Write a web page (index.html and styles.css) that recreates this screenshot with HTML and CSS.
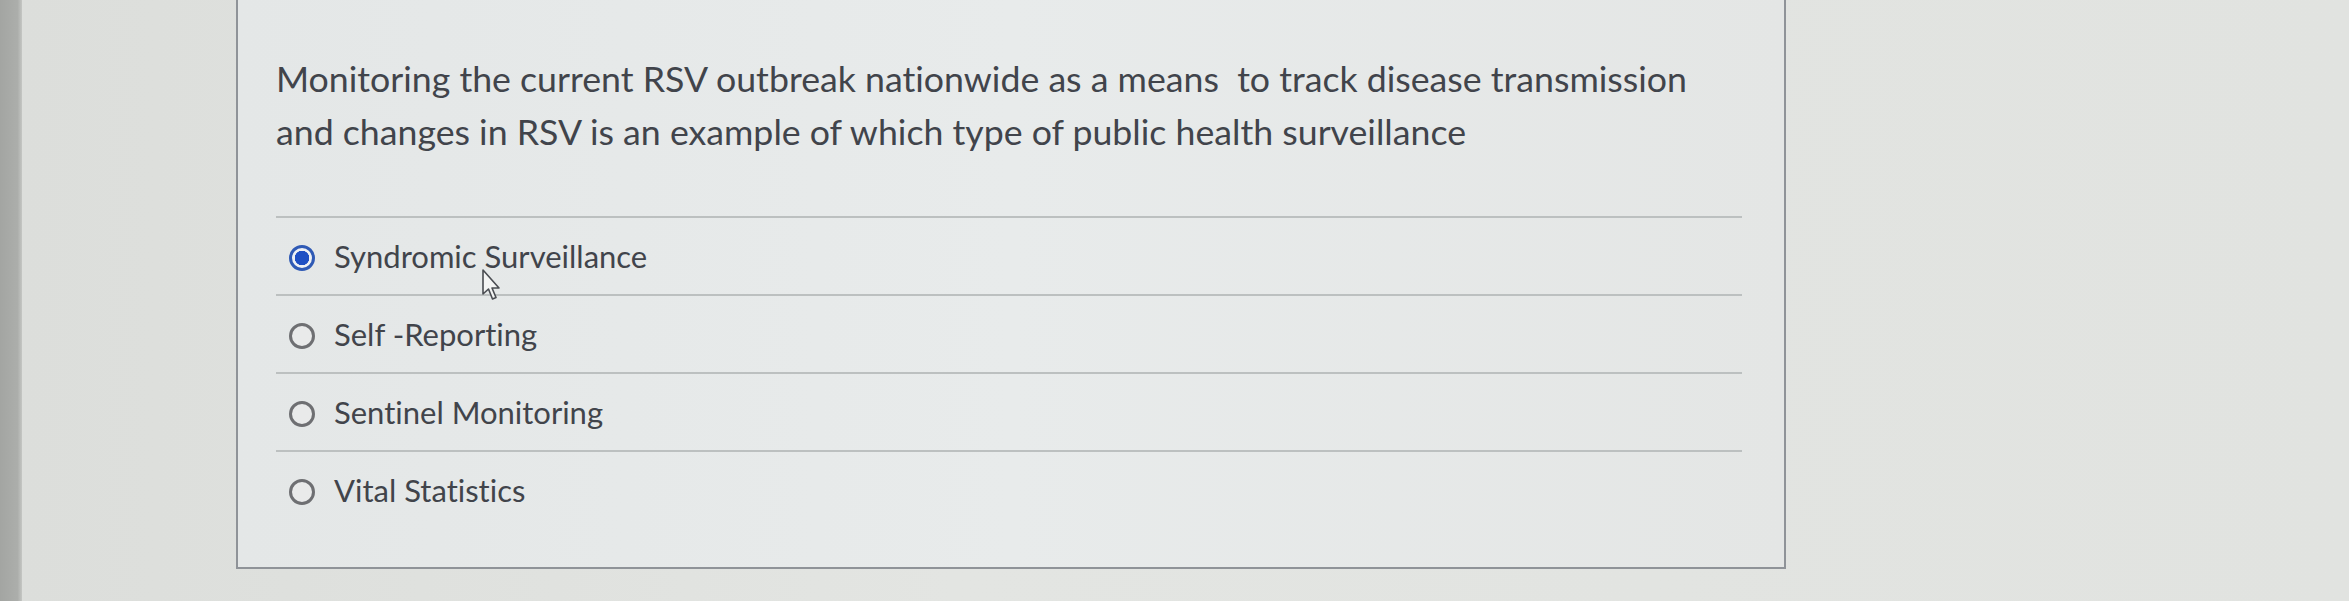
FILE: index.html
```html
<!DOCTYPE html>
<html lang="en">
<head>
<meta charset="utf-8">
<title>Question</title>
<link rel="stylesheet" href="styles.css">
</head>
<body>
<div class="screen">
  <div class="edge"></div>
  <main class="area">
    <section class="card">
      <p class="question">Monitoring the current RSV outbreak nationwide as a means&nbsp; to track disease transmission and changes in RSV is an example of which type of public health surveillance</p>
      <ul class="options">
        <li class="option"><span class="radio checked"></span><span class="label">Syndromic Surveillance</span></li>
        <li class="option"><span class="radio"></span><span class="label">Self -Reporting</span></li>
        <li class="option"><span class="radio"></span><span class="label">Sentinel Monitoring</span></li>
        <li class="option"><span class="radio"></span><span class="label">Vital Statistics</span></li>
      </ul>
    </section>
  </main>
  <svg class="cursor" width="20" height="34" viewBox="0 0 20 34" aria-hidden="true">
    <path d="M2 2 L2 26 L7.5 21 L11.5 31 L15 29.5 L11 20 L18 20 Z" fill="#f4f5f4" stroke="#4a4d52" stroke-width="1.6" stroke-linejoin="round"/>
  </svg>
</div>
</body>
</html>
```

FILE: styles.css
```css
html, body {
  margin: 0;
  padding: 0;
}
body {
  background: #dfe1de;
  font-family: Lato, "Open Sans", "Liberation Sans", sans-serif;
  font-variant-ligatures: none;
  color: #41444b;
  width: 2349px;
  height: 601px;
  overflow: hidden;
}
.screen {
  position: relative;
  display: flex;
  width: 2349px;
  height: 601px;
}
.edge {
  width: 22px;
  flex: none;
  background: linear-gradient(90deg, #a3a5a2 0%, #acaeab 80%, #c4c6c3 100%);
}
.area {
  flex: 1;
  padding-left: 214px;
  background: linear-gradient(90deg, #dcdedb 0%, #e3e5e2 40%, #e1e3e0 100%);
}
.card {
  width: 1550px;
  height: 569px;
  box-sizing: border-box;
  border: 2px solid #8f9398;
  border-top: none;
  background: linear-gradient(90deg, #e4e7e7 0%, #e8ebeb 50%, #e4e6e5 100%);
  padding: 52px 42px 0 38px;
}
.question {
  margin: 0;
  font-size: 35.7px;
  line-height: 53px;
  letter-spacing: 0;
  width: 1460px;
}
.options {
  list-style: none;
  margin: 58px 0 0 0;
  padding: 0;
}
.option {
  height: 78px;
  box-sizing: border-box;
  border-top: 2px solid #bcc0c0;
  display: flex;
  align-items: center;
  padding-left: 13px;
  font-size: 31px;
}
.radio {
  width: 26px;
  height: 26px;
  box-sizing: border-box;
  border-radius: 50%;
  border: 3px solid #6e6f72;
  background: #e9eaea;
  flex: none;
  margin-right: 19px;
  margin-top: 4px;
}
.radio.checked {
  border: 3.5px solid #2f5ab5;
  background: radial-gradient(circle, #1e4fc4 0 7px, #eef0f4 7.5px);
}
.label {
  line-height: 38px;
}
.cursor {
  position: absolute;
  left: 481px;
  top: 268px;
}
```
